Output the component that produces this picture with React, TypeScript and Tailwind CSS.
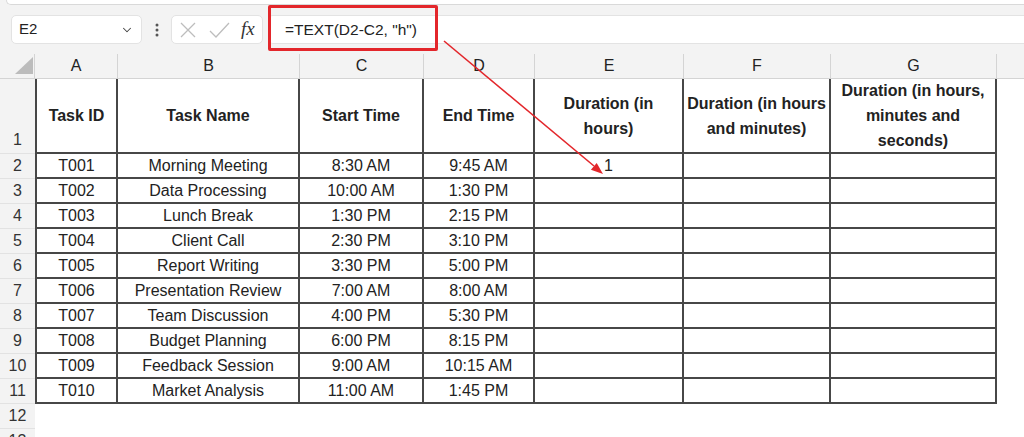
import { ChevronDown } from 'lucide-react';

interface Task {
  id: string;
  name: string;
  start: string;
  end: string;
}

const tasks: Task[] = [
  { id: 'T001', name: 'Morning Meeting', start: '8:30 AM', end: '9:45 AM' },
  { id: 'T002', name: 'Data Processing', start: '10:00 AM', end: '1:30 PM' },
  { id: 'T003', name: 'Lunch Break', start: '1:30 PM', end: '2:15 PM' },
  { id: 'T004', name: 'Client Call', start: '2:30 PM', end: '3:10 PM' },
  { id: 'T005', name: 'Report Writing', start: '3:30 PM', end: '5:00 PM' },
  { id: 'T006', name: 'Presentation Review', start: '7:00 AM', end: '8:00 AM' },
  { id: 'T007', name: 'Team Discussion', start: '4:00 PM', end: '5:30 PM' },
  { id: 'T008', name: 'Budget Planning', start: '6:00 PM', end: '8:15 PM' },
  { id: 'T009', name: 'Feedback Session', start: '9:00 AM', end: '10:15 AM' },
  { id: 'T010', name: 'Market Analysis', start: '11:00 AM', end: '1:45 PM' },
];

const letters = ['A', 'B', 'C', 'D', 'E', 'F', 'G'];

// cell inside the bordered table area
const cell = 'flex items-center justify-center border-r-2 border-b-2 border-[#474747] bg-white';
const rowHead = 'flex items-center justify-center bg-[#f3f3f3] border-b border-[#e2e2e2] text-[#333]';

export default function App() {
  return (
    <div
      className="relative h-[437px] w-[1024px] overflow-hidden bg-[#f3f3f3] text-[16px] text-[#222]"
      style={{ fontFamily: '"Liberation Sans", Arial, sans-serif' }}
    >
      {/* ribbon edge */}
      <div className="ml-[6px] h-[5px] rounded-bl-[6px] border-b border-l border-[#d9d9d9] bg-white" />

      {/* Formula bar */}
      <div className="mt-[10px] flex h-[29px] items-stretch">
        <div className="ml-[11px] flex w-[131px] items-center justify-between rounded-[5px] border border-[#e3e3e3] bg-white pl-[7px] pr-[7px]">
          <span className="text-[15px]">E2</span>
          <ChevronDown size={14} strokeWidth={1.8} className="text-[#444]" />
        </div>
        <div className="flex w-[29px] items-center justify-center">
          <svg width="4" height="14" viewBox="0 0 4 14">
            <circle cx="2" cy="2" r="1.5" fill="#555" />
            <circle cx="2" cy="7" r="1.5" fill="#555" />
            <circle cx="2" cy="12" r="1.5" fill="#555" />
          </svg>
        </div>
        <div className="flex w-[92px] items-center rounded-[5px] border border-[#e3e3e3] bg-white pl-[6px]">
          <svg width="18" height="18" viewBox="0 0 18 18" className="ml-[1px]">
            <path d="M2 2 L16 16 M16 2 L2 16" stroke="#bdbdbd" strokeWidth="1.3" fill="none" />
          </svg>
          <svg width="22" height="18" viewBox="0 0 22 18" className="ml-[11px]">
            <path d="M2 10 L8 16 L21 2" stroke="#bdbdbd" strokeWidth="1.3" fill="none" />
          </svg>
          <span
            className="ml-[11px] text-[19px] italic text-[#333]"
            style={{ fontFamily: '"Liberation Serif", "Times New Roman", serif' }}
          >
            fx
          </span>
        </div>
        <div className="ml-[5px] flex flex-1 items-center rounded-l-[5px] border-y border-l border-[#e3e3e3] bg-white pl-[16px]">
          <span className="text-[15.5px]">=TEXT(D2-C2, "h")</span>
        </div>
      </div>

      {/* Sheet grid */}
      <div className="mt-[10px] grid grid-cols-[35px_83px_182px_124px_111px_149px_147px_166px_1fr] grid-rows-[25px_75px_repeat(12,25px)]">
        {/* column header strip */}
        <div className="relative border-r border-b border-[#d4d4d4] bg-[#f3f3f3]">
          <svg width="18" height="17" viewBox="0 0 18 17" className="absolute left-[15px] top-[3px]">
            <polygon points="18,0 18,17 0,17" fill="#bcbcbc" />
          </svg>
        </div>
        {letters.map((l) => (
          <div key={l} className="flex items-center justify-center border-r border-b border-[#d4d4d4] bg-[#f3f3f3] text-[#222]">
            {l}
          </div>
        ))}
        <div className="border-b border-[#d4d4d4] bg-[#f3f3f3]" />

        {/* row 1: headers */}
        <div className="flex items-end justify-center bg-[#f3f3f3] pb-[1px] text-[#333] border-b border-[#e2e2e2] leading-[25px]">1</div>
        <div className={`${cell} border-l-2 bg-[#d0d0d0] font-bold`}>Task ID</div>
        <div className={`${cell} bg-[#d0d0d0] font-bold`}>Task Name</div>
        <div className={`${cell} bg-[#d0d0d0] font-bold`}>Start Time</div>
        <div className={`${cell} bg-[#d0d0d0] font-bold`}>End Time</div>
        <div className={`${cell} bg-[#d0d0d0] text-center font-bold leading-[25px]`}>
          Duration (in
          <br />
          hours)
        </div>
        <div className={`${cell} bg-[#d0d0d0] text-center font-bold leading-[25px]`}>
          Duration (in hours
          <br />
          and minutes)
        </div>
        <div className={`${cell} bg-[#d0d0d0] text-center font-bold leading-[25px]`}>
          Duration (in hours,
          <br />
          minutes and
          <br />
          seconds)
        </div>
        <div className="bg-white" />

        {/* data rows */}
        {tasks.map((t, i) => (
          <div key={t.id} className="contents">
            <div className={rowHead}>{i + 2}</div>
            <div className={`${cell} border-l-2`}>{t.id}</div>
            <div className={cell}>{t.name}</div>
            <div className={cell}>{t.start}</div>
            <div className={cell}>{t.end}</div>
            <div className={cell}>{i === 0 ? '1' : ''}</div>
            <div className={cell} />
            <div className={cell} />
            <div className="bg-white" />
          </div>
        ))}

        {/* empty rows */}
        {[12, 13].map((n) => (
          <div key={n} className="contents">
            <div className={rowHead}>{n}</div>
            <div className="col-span-8 bg-white" />
          </div>
        ))}
      </div>

      {/* annotation: red box + arrow */}
      <div className="pointer-events-none absolute left-[268px] top-[5px] h-[46px] w-[170px] rounded-[2px] border-[3px] border-[#e3262b]" />
      <svg className="pointer-events-none absolute left-0 top-0" width="1024" height="437" viewBox="0 0 1024 437">
        <line x1="444" y1="41" x2="594" y2="166" stroke="#e3262b" strokeWidth="1.6" />
        <polygon points="603,174 590.9,169.8 596.7,162.9" fill="#e3262b" />
      </svg>
    </div>
  );
}
